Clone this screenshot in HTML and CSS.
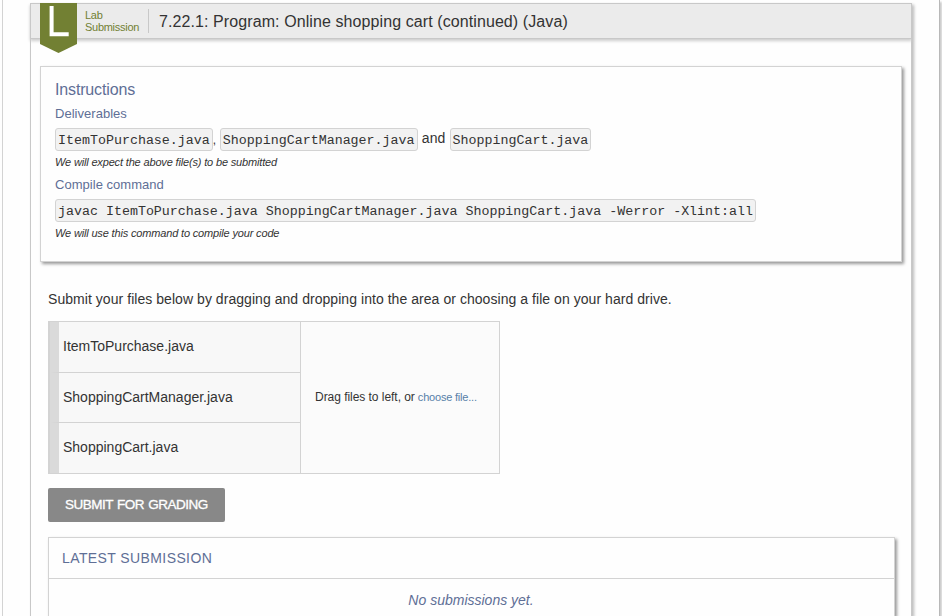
FILE: index.html
```
<!DOCTYPE html>
<html lang="en">
<head>
    <meta charset="UTF-8">
    <meta name="viewport" content="width=device-width, initial-scale=1.0">
    <title>7.22.1: Program: Online shopping cart (continued) (Java)</title>
    <link rel="stylesheet" href="styles.css">
</head>
<body>
    <div class="page">
        <div class="resource">
            <div class="header">
                <div class="badge">
                    <svg width="37" height="50" viewBox="0 0 37 50">
                        <path d="M0 0H37V41L18.5 50L0 41Z" fill="#728033"/>
                        <path d="M11.6 3V31.2H28.7" fill="none" stroke="#fff" stroke-width="4"/>
                    </svg>
                </div>
                <div class="type">Lab<br>Submission</div>
                <h1 class="title">7.22.1: Program: Online shopping cart (continued) (Java)</h1>
            </div>

            <div class="instructions">
                <h2>Instructions</h2>
                <h3>Deliverables</h3>
                <p class="files"><code>ItemToPurchase.java</code><span class="comma">,</span><code>ShoppingCartManager.java</code><span class="and">and</span><code>ShoppingCart.java</code></p>
                <p class="note">We will expect the above file(s) to be submitted</p>
                <h3>Compile command</h3>
                <p class="files"><code>javac ItemToPurchase.java ShoppingCartManager.java ShoppingCart.java -Werror -Xlint:all</code></p>
                <p class="note">We will use this command to compile your code</p>
            </div>

            <div class="submit-area">
                <p class="hint">Submit your files below by dragging and dropping into the area or choosing a file on your hard drive.</p>
                <div class="upload">
                    <div class="file-list">
                        <div class="file">ItemToPurchase.java</div>
                        <div class="file">ShoppingCartManager.java</div>
                        <div class="file">ShoppingCart.java</div>
                    </div>
                    <div class="drop"><span class="drag">Drag files to left, or</span><a class="choose">choose file...</a></div>
                </div>
                <button class="submit">SUBMIT FOR GRADING</button>
                <div class="latest">
                    <div class="latest-title">LATEST SUBMISSION</div>
                    <div class="latest-body">No submissions yet.</div>
                </div>
            </div>
        </div>
    </div>
</body>
</html>
```

FILE: styles.css
```
* {
    box-sizing: border-box;
}

body {
    margin: 0;
    font-family: "Liberation Sans", Arial, sans-serif;
    font-size: 14px;
    color: #333;
    background: #fefefe;
}

h1, h2, h3, p {
    margin: 0;
    font-weight: normal;
}

.page {
    width: 938px;
    height: 616px;
    margin-left: 2px;
    padding: 3px 28px 0;
    border-left: 1px solid #d3d3d3;
    border-right: 1px solid #b8b8b8;
    box-shadow: 2px 2px 2px #ccc;
    background: #fefefe;
}

/* Main section */
.resource {
    width: 882px;
    height: 613px;
    margin-left: -1px;
    border-left: 1px solid #c8c8c8;
    border-right: 1px solid #c8c8c8;
    box-shadow: 2px 2px 3px #bbb;
}

.header {
    display: flex;
    width: 882px;
    height: 36px;
    margin-left: -1px;
    padding-left: 9px;
    border: 1px solid #c8c8c8;
    background: #ebebeb;
    box-shadow: 0 2px 3px #ccc;
}

.badge {
    width: 37px;
    height: 50px;
    margin-top: -1px;
}

.type {
    width: 65px;
    height: 24px;
    margin: 5px 0 0 7px;
    padding-left: 1px;
    border-right: 1px solid #c8c8c8;
    font-size: 11px;
    line-height: 12px;
    letter-spacing: -0.28px;
    color: #728033;
}

.title {
    margin-left: 10px;
    font-size: 16px;
    line-height: 35px;
    letter-spacing: 0.09px;
}

/* Instructions box */
.instructions {
    width: 862px;
    height: 196px;
    margin: 27px 0 0 9px;
    padding: 12px 14px;
    border: 1px solid #d3d3d3;
    box-shadow: 2px 2px 3px #999;
}

h2 {
    font-size: 16px;
    line-height: 22px;
    height: 23px;
    letter-spacing: -0.15px;
    color: #5f6f96;
}

h3 {
    font-size: 13px;
    line-height: 22px;
    height: 26px;
    padding-top: 1px;
    letter-spacing: 0.03px;
    color: #5f6f96;
}

.files {
    display: flex;
    height: 23px;
    line-height: 20px;
}

code {
    height: 23px;
    padding: 1px 2px 0;
    border: 1px solid #d3d3d3;
    border-radius: 3px;
    background: #f2f2f2;
    font-family: "Liberation Mono", "Courier New", monospace;
    font-size: 13.32px;
    line-height: 22px;
    white-space: nowrap;
}

.comma {
    width: 7px;
    font-size: 12px;
    line-height: 24px;
}

.and {
    width: 32px;
    text-align: center;
}

.note {
    height: 22px;
    font-size: 11px;
    font-style: italic;
    line-height: 22px;
    letter-spacing: -0.16px;
}

/* Upload area */
.submit-area {
    padding: 27px 0 0 17px;
}

.hint {
    line-height: 20px;
    letter-spacing: 0.05px;
}

.upload {
    display: flex;
    width: 452px;
    height: 153px;
    margin-top: 12px;
    border: 1px solid #d3d3d3;
    border-left-width: 2px;
}

.file-list {
    display: flex;
    flex-direction: column;
    width: 251px;
    border-right: 1px solid #d3d3d3;
}

.file {
    flex: 1;
    padding-left: 4px;
    border-left: 9px solid #dadada;
    background: #f8f8f8;
    line-height: 49px;
}

.file + .file {
    border-top: 1px solid #d3d3d3;
}

.drop {
    display: flex;
    flex: 1;
    align-items: center;
    padding: 0 0 2px 14px;
    background: #fbfbfb;
    font-size: 12px;
}

.drag {
    letter-spacing: -0.04px;
}

.choose {
    margin-left: 3px;
    font-size: 11px;
    letter-spacing: -0.2px;
    color: #5780a8;
}

.submit {
    display: block;
    width: 177px;
    height: 34px;
    margin-top: 14px;
    padding: 0 0 2px;
    border: none;
    border-radius: 2px;
    background: #888;
    color: #fff;
    font-family: inherit;
    font-size: 13.5px;
    letter-spacing: -0.5px;
    word-spacing: 1px;
    -webkit-text-stroke: 0.3px #fff;
}

/* Latest submission */
.latest {
    width: 847px;
    height: 79px;
    margin-top: 15px;
    border: 1px solid #d3d3d3;
    border-bottom: none;
    box-shadow: 2px 2px 3px #999;
    color: #5f6f96;
}

.latest-title {
    height: 41px;
    padding-left: 13px;
    border-bottom: 1px solid #d3d3d3;
    line-height: 41px;
    letter-spacing: 0.4px;
}

.latest-body {
    height: 37px;
    padding-right: 1px;
    font-style: italic;
    line-height: 42px;
    text-align: center;
}
```
